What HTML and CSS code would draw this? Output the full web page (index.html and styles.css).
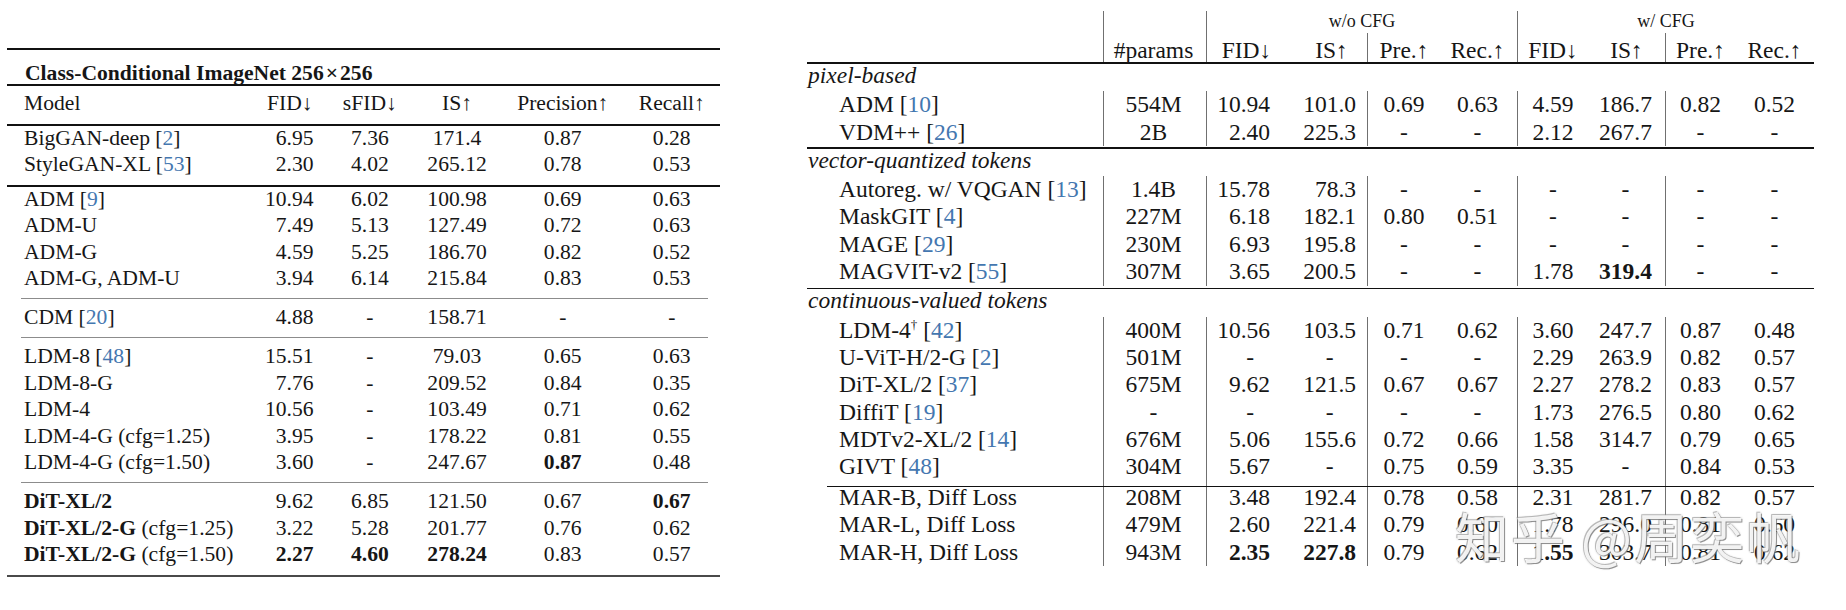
FILE: index.html
```html
<!DOCTYPE html>
<html>
<head>
<meta charset="utf-8">
<link rel="stylesheet" href="styles.css">
</head>
<body>
<div class="page">
  <div class="lt">
    <div class="rule"></div>
    <div class="title">Class-Conditional ImageNet 256<span class="x">×</span>256</div>
    <div class="rule"></div>
    <div class="lrow hdr"><span class="m">Model</span><span class="f">FID↓</span><span>sFID↓</span><span>IS↑</span><span>Precision↑</span><span>Recall↑</span></div>
    <div class="rule blk"></div>
    <div class="lrow"><span class="m">BigGAN-deep [<span class="ref">2</span>]</span><span class="f">6.95</span><span>7.36</span><span>171.4</span><span>0.87</span><span>0.28</span></div>
    <div class="lrow"><span class="m">StyleGAN-XL [<span class="ref">53</span>]</span><span class="f">2.30</span><span>4.02</span><span>265.12</span><span>0.78</span><span>0.53</span></div>
    <div class="rule blk"></div>
    <div class="lrow"><span class="m">ADM [<span class="ref">9</span>]</span><span class="f">10.94</span><span>6.02</span><span>100.98</span><span>0.69</span><span>0.63</span></div>
    <div class="lrow"><span class="m">ADM-U</span><span class="f">7.49</span><span>5.13</span><span>127.49</span><span>0.72</span><span>0.63</span></div>
    <div class="lrow"><span class="m">ADM-G</span><span class="f">4.59</span><span>5.25</span><span>186.70</span><span>0.82</span><span>0.52</span></div>
    <div class="lrow"><span class="m">ADM-G, ADM-U</span><span class="f">3.94</span><span>6.14</span><span>215.84</span><span>0.83</span><span>0.53</span></div>
    <div class="rule gray"></div>
    <div class="lrow"><span class="m">CDM [<span class="ref">20</span>]</span><span class="f">4.88</span><span>-</span><span>158.71</span><span>-</span><span>-</span></div>
    <div class="rule gray"></div>
    <div class="lrow"><span class="m">LDM-8 [<span class="ref">48</span>]</span><span class="f">15.51</span><span>-</span><span>79.03</span><span>0.65</span><span>0.63</span></div>
    <div class="lrow"><span class="m">LDM-8-G</span><span class="f">7.76</span><span>-</span><span>209.52</span><span>0.84</span><span>0.35</span></div>
    <div class="lrow"><span class="m">LDM-4</span><span class="f">10.56</span><span>-</span><span>103.49</span><span>0.71</span><span>0.62</span></div>
    <div class="lrow"><span class="m">LDM-4-G (cfg=1.25)</span><span class="f">3.95</span><span>-</span><span>178.22</span><span>0.81</span><span>0.55</span></div>
    <div class="lrow"><span class="m">LDM-4-G (cfg=1.50)</span><span class="f">3.60</span><span>-</span><span>247.67</span><span class="b">0.87</span><span>0.48</span></div>
    <div class="rule gray"></div>
    <div class="lrow"><span class="m"><b>DiT-XL/2</b></span><span class="f">9.62</span><span>6.85</span><span>121.50</span><span>0.67</span><span class="b">0.67</span></div>
    <div class="lrow"><span class="m"><b>DiT-XL/2-G</b> (cfg=1.25)</span><span class="f">3.22</span><span>5.28</span><span>201.77</span><span>0.76</span><span>0.62</span></div>
    <div class="lrow"><span class="m"><b>DiT-XL/2-G</b> (cfg=1.50)</span><span class="f b">2.27</span><span class="b">4.60</span><span class="b">278.24</span><span>0.83</span><span>0.57</span></div>
    <div class="rule bot"></div>
  </div>

  <div class="rt">
    <div class="rh1"><span></span><span class="v"></span><span class="v">w/o CFG</span><span class="v">w/ CFG</span></div>
    <div class="rrow rh2"><span></span><span class="v p">#params</span><span class="v">FID↓</span><span class="hi1">IS↑</span><span class="v">Pre.↑</span><span class="r5">Rec.↑</span><span class="v">FID↓</span><span>IS↑</span><span class="v">Pre.↑</span><span>Rec.↑</span></div>
    <div class="rrule"></div>
    <div class="cat">pixel-based</div>
    <div class="rrow"><span class="nm">ADM [<span class="ref">10</span>]</span><span class="v p">554M</span><span class="v f1">10.94</span><span class="i1">101.0</span><span class="v">0.69</span><span class="r5">0.63</span><span class="v">4.59</span><span class="i2">186.7</span><span class="v">0.82</span><span>0.52</span></div>
    <div class="rrow"><span class="nm">VDM++ [<span class="ref">26</span>]</span><span class="v p">2B</span><span class="v f1">2.40</span><span class="i1">225.3</span><span class="v">-</span><span class="r5">-</span><span class="v">2.12</span><span class="i2">267.7</span><span class="v">-</span><span>-</span></div>
    <div class="rrule m1"></div>
    <div class="cat">vector-quantized tokens</div>
    <div class="rrow"><span class="nm">Autoreg. w/ VQGAN [<span class="ref">13</span>]</span><span class="v p">1.4B</span><span class="v f1">15.78</span><span class="i1">78.3</span><span class="v">-</span><span class="r5">-</span><span class="v">-</span><span class="i2">-</span><span class="v">-</span><span>-</span></div>
    <div class="rrow"><span class="nm">MaskGIT [<span class="ref">4</span>]</span><span class="v p">227M</span><span class="v f1">6.18</span><span class="i1">182.1</span><span class="v">0.80</span><span class="r5">0.51</span><span class="v">-</span><span class="i2">-</span><span class="v">-</span><span>-</span></div>
    <div class="rrow"><span class="nm">MAGE [<span class="ref">29</span>]</span><span class="v p">230M</span><span class="v f1">6.93</span><span class="i1">195.8</span><span class="v">-</span><span class="r5">-</span><span class="v">-</span><span class="i2">-</span><span class="v">-</span><span>-</span></div>
    <div class="rrow"><span class="nm">MAGVIT-v2 [<span class="ref">55</span>]</span><span class="v p">307M</span><span class="v f1">3.65</span><span class="i1">200.5</span><span class="v">-</span><span class="r5">-</span><span class="v">1.78</span><span class="i2 b">319.4</span><span class="v">-</span><span>-</span></div>
    <div class="rrule m2"></div>
    <div class="cat">continuous-valued tokens</div>
    <div class="rrow"><span class="nm">LDM-4<sup>†</sup> [<span class="ref">42</span>]</span><span class="v p">400M</span><span class="v f1">10.56</span><span class="i1">103.5</span><span class="v">0.71</span><span class="r5">0.62</span><span class="v">3.60</span><span class="i2">247.7</span><span class="v">0.87</span><span>0.48</span></div>
    <div class="rrow"><span class="nm">U-ViT-H/2-G [<span class="ref">2</span>]</span><span class="v p">501M</span><span class="v f1 d">-</span><span class="i1 d">-</span><span class="v">-</span><span class="r5">-</span><span class="v">2.29</span><span class="i2">263.9</span><span class="v">0.82</span><span>0.57</span></div>
    <div class="rrow"><span class="nm">DiT-XL/2 [<span class="ref">37</span>]</span><span class="v p">675M</span><span class="v f1">9.62</span><span class="i1">121.5</span><span class="v">0.67</span><span class="r5">0.67</span><span class="v">2.27</span><span class="i2">278.2</span><span class="v">0.83</span><span>0.57</span></div>
    <div class="rrow"><span class="nm">DiffiT [<span class="ref">19</span>]</span><span class="v p">-</span><span class="v f1 d">-</span><span class="i1 d">-</span><span class="v">-</span><span class="r5">-</span><span class="v">1.73</span><span class="i2">276.5</span><span class="v">0.80</span><span>0.62</span></div>
    <div class="rrow"><span class="nm">MDTv2-XL/2 [<span class="ref">14</span>]</span><span class="v p">676M</span><span class="v f1">5.06</span><span class="i1">155.6</span><span class="v">0.72</span><span class="r5">0.66</span><span class="v">1.58</span><span class="i2">314.7</span><span class="v">0.79</span><span>0.65</span></div>
    <div class="rrow pb"><span class="nm">GIVT [<span class="ref">48</span>]</span><span class="v p">304M</span><span class="v f1">5.67</span><span class="i1 d">-</span><span class="v">0.75</span><span class="r5">0.59</span><span class="v">3.35</span><span class="i2">-</span><span class="v">0.84</span><span>0.53</span></div>
    <div class="mar">
      <div class="rrow first"><span class="nm">MAR-B, Diff Loss</span><span class="v p">208M</span><span class="v f1">3.48</span><span class="i1">192.4</span><span class="v">0.78</span><span class="r5">0.58</span><span class="v">2.31</span><span class="i2">281.7</span><span class="v">0.82</span><span>0.57</span></div>
      <div class="rrow"><span class="nm">MAR-L, Diff Loss</span><span class="v p">479M</span><span class="v f1">2.60</span><span class="i1">221.4</span><span class="v">0.79</span><span class="r5">0.60</span><span class="v">1.78</span><span class="i2">296.0</span><span class="v">0.81</span><span>0.60</span></div>
      <div class="rrow"><span class="nm">MAR-H, Diff Loss</span><span class="v p">943M</span><span class="v f1 b">2.35</span><span class="i1 b">227.8</span><span class="v">0.79</span><span class="r5">0.62</span><span class="v b">1.55</span><span class="i2">303.7</span><span class="v">0.81</span><span>0.62</span></div>
    </div>
  </div>
</div>
<div class="wm">知乎 @周奕帆</div>
</body>
</html>
```

FILE: styles.css
```css
* { box-sizing: border-box; }
html, body { margin: 0; padding: 0; background: #fff; }
body {
  width: 1846px;
  height: 610px;
  overflow: hidden;
  position: relative;
  font-family: "Liberation Serif", "Times New Roman", serif;
  color: #161616;
}
.page { display: flex; align-items: flex-start; }
.b, b { font-weight: bold; }
.ref { color: #4477b0; }

/* left table */
.lt { margin-left: 7px; margin-top: 48px; width: 713px; font-size: 21.6px; }
.rule { height: 2px; background: #111; }
.rule.blk { margin: 7px 0 -1px; }
.rule.gray { height: 1.5px; background: #8c8c8c; margin: 6px 12px 5px 14px; }
.rule.bot { height: 2px; background: #4a4a4a; margin-top: 7px; }
.title { padding: 12px 0 0 18px; line-height: 22px; font-weight: bold; white-space: nowrap; }
.title .x { margin: 0 2px; }
.lrow {
  display: grid;
  grid-template-columns: 241.5px 79.1px 84.5px 89.9px 121.5px 96.5px;
  height: 26.5px;
  line-height: 26.5px;
}
.lrow > span { text-align: center; white-space: nowrap; }
.lrow > .m { text-align: left; padding-left: 17px; }
.lrow > .f { text-align: right; padding-right: 14px; }
.lrow.hdr { margin-top: 4px; }
.lrow.hdr > .f { padding-right: 15px; }

/* right table */
.rt { margin-left: 87px; margin-top: 11px; width: 1007px; font-size: 23.5px; }
.v { border-left: 1.5px solid #707070; }
.rh1 {
  display: grid;
  grid-template-columns: 296px 103px 311px 297px;
  height: 22px;
  line-height: 20px;
  font-size: 18px;
}
.rh1 > span { text-align: center; white-space: nowrap; }
.rrow {
  display: grid;
  grid-template-columns: 296px 103px 80px 81px 73px 77px 71px 77px 70px 79px;
  height: 27.4px;
  line-height: 27.4px;
}
.rrow > span { text-align: center; white-space: nowrap; }
.rrow > .nm { text-align: left; padding-left: 32px; }
.rrow > .p { padding-right: 3px; }
.rrow > .f1 { text-align: right; padding-right: 16px; }
.rrow > .f1.d { padding-right: 32px; }
.rrow > .i1 { text-align: right; padding-right: 11px; }
.rrow > .i1.d { padding-right: 33.5px; }
.rrow > .i2 { padding-right: 2px; }
.rrow > .r5 { padding-right: 2px; }
.rrow > .hi1 { padding-left: 10px; }
.rh2 { height: 29px; line-height: 24px; }
.rh2 > span { padding-top: 5px; }
.rrule { height: 2px; background: #111; }
.rrule.m1 { height: 1.5px; margin-top: 1px; }
.rrule.m2 { height: 1.5px; margin-top: 2px; }
.cat { height: 27.4px; line-height: 22px; font-style: italic; padding-left: 1px; white-space: nowrap; }
.rrow.pb { height: 32.4px; }
.mar { margin-left: 20px; border-top: 1.5px solid #111; }
.mar .rrow { grid-template-columns: 276px 103px 80px 81px 73px 77px 71px 77px 70px 79px; }
.mar .rrow > .nm { padding-left: 12px; }
.mar .rrow.first { height: 24.5px; line-height: 21px; }
sup { font-size: 13px; line-height: 0; vertical-align: 9px; }

/* watermark overlay */
.wm {
  position: absolute;
  left: 1455px;
  top: 506px;
  font-family: "Noto Sans CJK SC", sans-serif;
  font-size: 54px;
  line-height: 60px;
  letter-spacing: 2px;
  white-space: nowrap;
  color: rgba(255, 255, 255, 0.9);
  text-shadow:
    1px 1px 0 rgba(110, 110, 110, 0.7),
    -1px -1px 0 rgba(150, 150, 150, 0.55),
    0 0 2px rgba(90, 90, 90, 0.7);
}
```
